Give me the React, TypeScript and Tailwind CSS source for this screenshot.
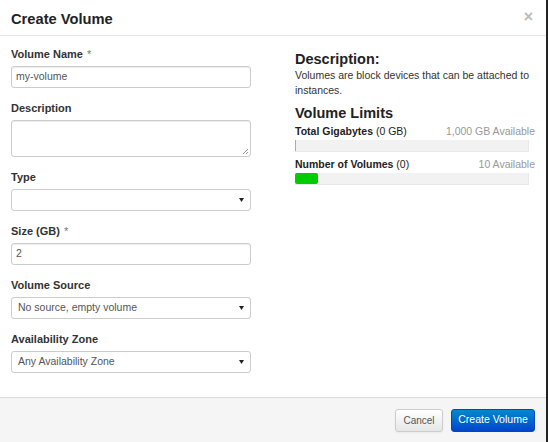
import React from 'react'

const font = { fontFamily: '"Liberation Sans", Arial, sans-serif' }

function Label({ text, required }: { text: string; required?: boolean }) {
  return (
    <div className="h-[15px] mb-[4px] text-[11px] leading-[15px] font-bold text-[#333]">
      {text}
      {required && <span className="ml-[4px] text-[#777] font-normal">*</span>}
    </div>
  )
}

function TextInput({ value }: { value: string }) {
  return (
    <div className="h-[22px] w-full rounded-[3px] border border-[#ccc] bg-white px-[4px] flex items-center text-[10.5px] text-[#555] shadow-[inset_0_1px_1px_rgba(0,0,0,0.075)]">
      {value}
    </div>
  )
}

function Select({ value }: { value: string }) {
  return (
    <div className="h-[22px] w-full rounded-[3px] border border-[#ccc] bg-white pl-[6px] pr-[6px] flex items-center justify-between text-[10.5px] text-[#555]">
      <span>{value}</span>
      <svg width="5" height="4" viewBox="0 0 5 4">
        <path d="M0 0h5L2.5 4z" fill="#222" />
      </svg>
    </div>
  )
}

function Bar({ pct, label, count, avail }: { pct: number; label: string; count: string; avail: string }) {
  return (
    <div className="mb-[5px]">
      <div className="flex justify-between h-[15px] leading-[15px] text-[10.5px] mb-[1px]">
        <span className="text-[#222]">
          <span className="font-bold">{label}</span> {count}
        </span>
        <span className="text-[#999]">{avail}</span>
      </div>
      <div className="h-[12px] w-[234px] bg-[#f2f2f2] border-r border-b border-[#e8e8e8] flex">
        <div className={pct > 2 ? 'h-full bg-[#00cc00] rounded-[2px]' : 'h-full bg-[#66dd66]'} style={{ width: pct }} />
      </div>
    </div>
  )
}

export default function App() {
  return (
    <div style={font} className="w-[548px] h-[442px] bg-white flex flex-col border-r-2 border-[#222] overflow-hidden">
      {/* Header */}
      <div className="h-[36px] shrink-0 border-b border-[#e5e5e5] pl-[11px] pr-[13px] pt-[3px] flex items-center justify-between">
        <h3 className="text-[14.7px] font-bold text-[#222]">Create Volume</h3>
        <span className="-mt-[5px] text-[16px] font-bold text-[#bbb] leading-none">×</span>
      </div>

      {/* Body */}
      <div className="flex-1 flex gap-[44px] pl-[11px] pr-[11px] pt-[11px]">
        <div className="w-[240px]">
          <div className="mb-[13px]">
            <Label text="Volume Name" required />
            <TextInput value="my-volume" />
          </div>
          <div className="mb-[13px]">
            <Label text="Description" />
            <div className="relative h-[37px] w-full rounded-[3px] border border-[#ccc] bg-white shadow-[inset_0_1px_1px_rgba(0,0,0,0.075)]">
              <svg className="absolute right-[1px] bottom-[1px]" width="7" height="7" viewBox="0 0 7 7">
                <path d="M6 1L1 6M6 4L4 6" stroke="#999" strokeWidth="1" />
              </svg>
            </div>
          </div>
          <div className="mb-[13px]">
            <Label text="Type" />
            <Select value="" />
          </div>
          <div className="mb-[13px]">
            <Label text="Size (GB)" required />
            <TextInput value="2" />
          </div>
          <div className="mb-[13px]">
            <Label text="Volume Source" />
            <Select value="No source, empty volume" />
          </div>
          <div className="mb-[13px]">
            <Label text="Availability Zone" />
            <Select value="Any Availability Zone" />
          </div>
        </div>

        <div className="w-[240px] pt-[3px]">
          <h3 className="text-[14.5px] leading-[18px] font-bold text-[#222]">Description:</h3>
          <p className="text-[10.5px] leading-[15px] text-[#333] mb-[6px]">
            Volumes are block devices that can be attached to instances.
          </p>
          <h3 className="text-[14.5px] leading-[18px] font-bold text-[#222] mb-[2px]">Volume Limits</h3>
          <Bar pct={1} label="Total Gigabytes" count="(0 GB)" avail="1,000 GB Available" />
          <Bar pct={23} label="Number of Volumes" count="(0)" avail="10 Available" />
        </div>
      </div>

      {/* Footer */}
      <div className="h-[45px] shrink-0 bg-[#f5f5f5] border-t border-[#ddd] flex items-center justify-end gap-[8px] pr-[11px]">
        <button className="h-[23px] w-[48px] rounded-[3px] border border-[#ccc] bg-gradient-to-b from-white to-[#e6e6e6] text-[10px] text-[#555] shadow-[0_1px_2px_rgba(0,0,0,0.05)]">
          Cancel
        </button>
        <button className="h-[23px] w-[84px] rounded-[3px] border border-[#0044cc] bg-gradient-to-b from-[#0088cc] to-[#0044cc] text-[10.5px] text-white">
          Create Volume
        </button>
      </div>
    </div>
  )
}
